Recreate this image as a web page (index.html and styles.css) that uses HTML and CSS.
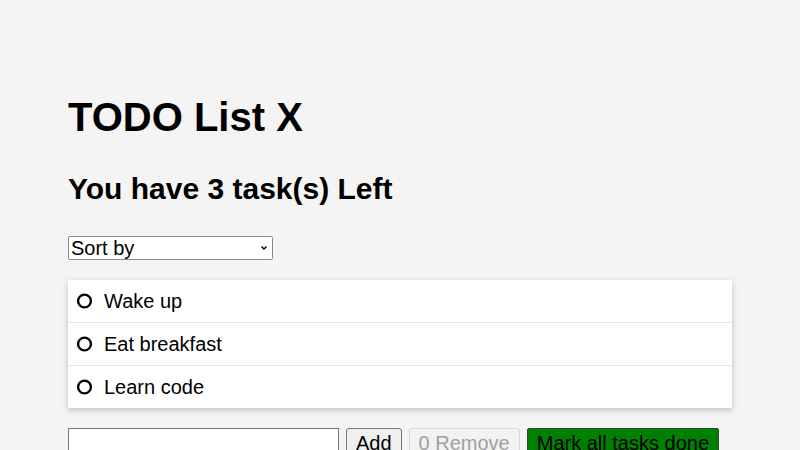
FILE: index.html
```html
<!DOCTYPE html>
<html lang="en">
<head>
<meta charset="utf-8">
<title>TODO List X</title>
<link rel="stylesheet" href="styles.css">
</head>
<body>
<div class="app">
  <h1 class="title">TODO List X</h1>
  <h2 class="count">You have 3 task(s) Left</h2>
  <div class="sort-wrap">
    <select class="sort">
      <option>Sort by</option>
    </select>
    <svg class="chev" width="6" height="4" viewBox="0 0 6 4"><path d="M0.5 0.5 L3 3 L5.5 0.5" fill="none" stroke="#000" stroke-width="1.4"/></svg>
  </div>
  <ul class="tasks">
    <li class="task"><svg class="check" width="15" height="16" viewBox="0 0 15 16"><circle cx="7.5" cy="8" r="6.4" fill="none" stroke="#000" stroke-width="2.3"/></svg><span class="label">Wake up</span></li>
    <li class="task"><svg class="check" width="15" height="16" viewBox="0 0 15 16"><circle cx="7.5" cy="8" r="6.4" fill="none" stroke="#000" stroke-width="2.3"/></svg><span class="label">Eat breakfast</span></li>
    <li class="task"><svg class="check" width="15" height="16" viewBox="0 0 15 16"><circle cx="7.5" cy="8" r="6.4" fill="none" stroke="#000" stroke-width="2.3"/></svg><span class="label">Learn code</span></li>
  </ul>
  <div class="controls">
    <input class="new-task" type="text">
    <button class="btn">Add</button>
    <button class="btn" disabled>0 Remove</button>
    <button class="btn btn-done">Mark all tasks done</button>
  </div>
</div>
</body>
</html>
```

FILE: styles.css
```css
html, body {
  margin: 0;
  background: #f4f4f4;
  font-family: "Liberation Sans", Arial, sans-serif;
  color: #000;
}

.app {
  width: 664px;
  margin: 0 auto;
  padding-top: 94px;
}

.title {
  margin: 0 0 31px;
  font-size: 40px;
  line-height: 46px;
  font-weight: bold;
}

.count {
  margin: 0 0 30px;
  font-size: 30px;
  line-height: 35px;
  font-weight: bold;
}

.sort-wrap {
  position: relative;
  width: 205px;
  margin: 0 0 20px;
}

.sort {
  display: block;
  width: 205px;
  height: 24px;
  margin: 0;
  font-family: "Liberation Sans", Arial, sans-serif;
  font-size: 20px;
  line-height: 22px;
  padding: 0 0 0 2px;
  border: 1px solid #8a8a8a;
  border-radius: 2px;
  background: #fff;
  color: #000;
  -webkit-appearance: none;
  appearance: none;
}

.chev {
  position: absolute;
  right: 6px;
  top: 10px;
  pointer-events: none;
}

.tasks {
  list-style: none;
  margin: 0 0 20px;
  padding: 0;
  background: #fff;
  box-shadow: 0 2px 6px rgba(0, 0, 0, 0.22);
}

.task {
  display: flex;
  align-items: center;
  gap: 12px;
  height: 42px;
  padding-left: 9px;
  font-size: 20px;
  border-top: 1px solid #e6e6e6;
}

.task:first-child {
  border-top: none;
}

.check {
  flex: none;
  display: block;
}

.controls {
  display: flex;
  align-items: flex-start;
  gap: 7px;
}

.new-task {
  width: 265px;
  height: 28px;
  margin: 0;
  padding: 1px 2px;
  font-size: 20px;
  border: 1px solid #767676;
  background: #fff;
}

.btn {
  margin: 0;
  padding: 1px 9px;
  font-family: "Liberation Sans", Arial, sans-serif;
  font-size: 20px;
  line-height: 27px;
  color: #000;
  background: #efefef;
  border: 1px solid #767676;
  border-radius: 3px;
}

.btn:disabled {
  color: #a0a0a0;
  background: #f2f2f2;
  border-color: #d6d6d6;
}

.btn-done {
  background: #008000;
  border-color: #2a4a2a;
  border-radius: 2px;
}
```
